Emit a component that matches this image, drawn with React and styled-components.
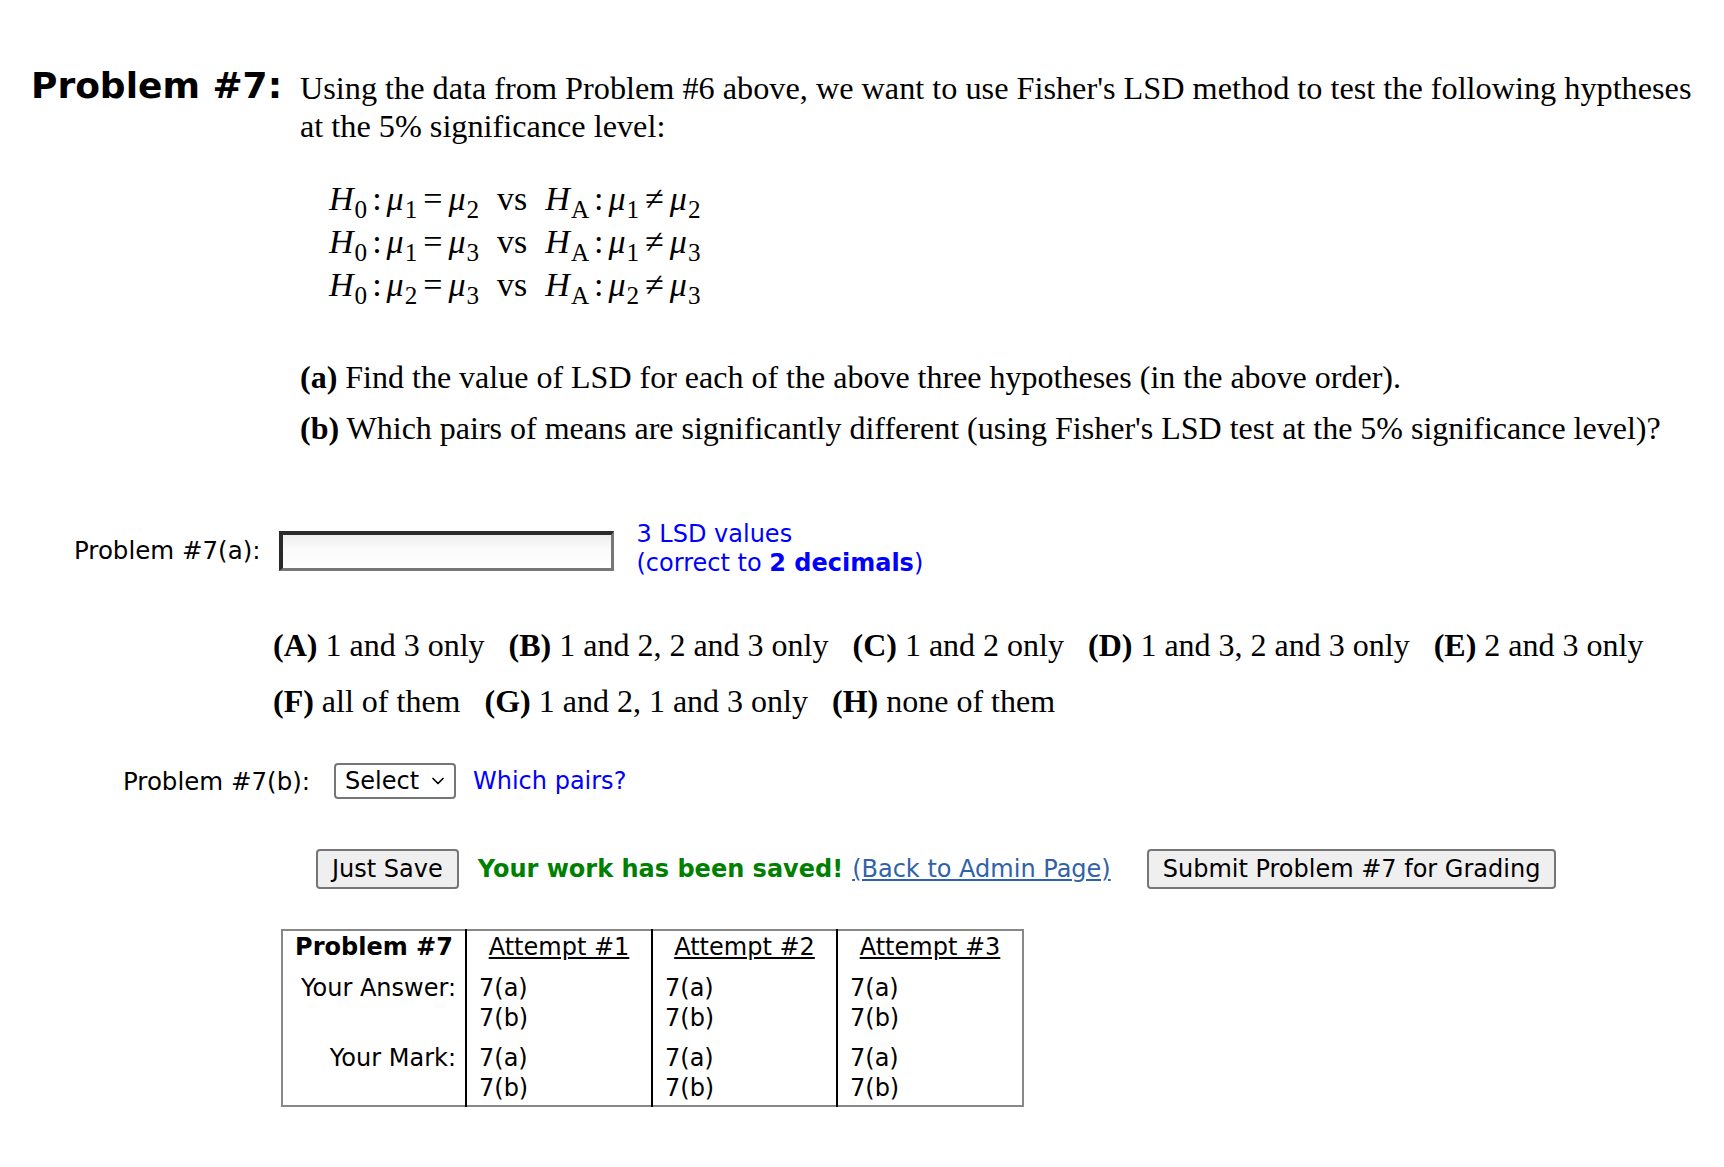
import React from 'react';
import styled, { createGlobalStyle } from 'styled-components';
import { ChevronDown } from 'lucide-react';

const GlobalStyle = createGlobalStyle`
    html, body {
        margin: 0;
        padding: 0;
        background: #ffffff;
        color: #000000;
    }
`;

const Page = styled.div`
    width: 1724px;
    min-height: 1167px;
    padding-top: 63px;
    box-sizing: border-box;
`;

const ProblemRow = styled.div`
    display: flex;
    align-items: flex-start;
    padding-left: 31px;
`;

const ProblemTitle = styled.div`
    width: 269px;
    flex-shrink: 0;
    font-family: "DejaVu Sans", Verdana, sans-serif;
    font-weight: bold;
    font-size: 36px;
    line-height: 46px;
`;

const SerifText = styled.div`
    font-family: "Liberation Serif", "Times New Roman", serif;
    font-size: 32px;
    line-height: 38px;
    white-space: nowrap;
`;

const Intro = styled(SerifText)`
    padding-top: 6px;
    font-size: 32.25px;
`;

const Equations = styled.div`
    margin: 32px 0 0 329px;
    font-family: "Liberation Serif", "Times New Roman", serif;
    font-size: 34px;
    line-height: 43px;
`;

const EqLine = styled.div`
    white-space: nowrap;
`;

const Var = styled.i`
    font-style: italic;
`;

const Sub = styled.sub`
    font-size: 0.74em;
    line-height: 0;
    vertical-align: -0.3em;
    margin-left: 1px;
`;

const Op = styled.span`
    margin: 0 ${(p) => p.$space || 6}px;
`;

const Vs = styled.span`
    margin: 0 18px;
`;

const Parts = styled.div`
    margin: 52px 0 0 300px;
    display: flex;
    flex-direction: column;
    gap: 13px;
`;

const SansLabel = styled.span`
    font-family: "DejaVu Sans", Verdana, sans-serif;
    font-size: 24.5px;
    white-space: nowrap;
`;

const AnswerRow = styled.div`
    display: flex;
    align-items: center;
    padding-left: ${(p) => p.$indent}px;
    margin-top: ${(p) => p.$top}px;
`;

const TextInput = styled.input`
    width: 335px;
    height: 40px;
    box-sizing: border-box;
    margin-left: 19px;
    border-style: solid;
    border-width: 4px 3px 3px 4px;
    border-color: #2a2a2a #777777 #777777 #2a2a2a;
    background: linear-gradient(#eeeeee, #fafafa 40%, #ffffff);
    font-size: 22px;
    outline: none;
`;

const Hint = styled.div`
    margin-left: 22px;
    font-family: "DejaVu Sans", Verdana, sans-serif;
    font-size: 24px;
    line-height: 29px;
    color: #0000ff;
    align-self: flex-start;
    margin-top: -3px;

    b {
        font-weight: bold;
    }
`;

const Choices = styled.div`
    margin: 39px 0 0 273px;
    font-family: "Liberation Serif", "Times New Roman", serif;
    font-size: 32px;
    line-height: 56px;
`;

const Choice = styled.span`
    white-space: nowrap;
    margin-right: 24px;

    b {
        font-weight: bold;
    }
`;

const SelectWrap = styled.span`
    position: relative;
    display: inline-flex;
    margin-left: 24px;
`;

const PairSelect = styled.select`
    appearance: none;
    width: 122px;
    height: 36px;
    font-family: "DejaVu Sans", Verdana, sans-serif;
    font-size: 24px;
    color: #000;
    background: #ffffff;
    border: 2px solid #767676;
    border-radius: 4px;
    padding: 0 30px 0 9px;
`;

const Caret = styled(ChevronDown)`
    position: absolute;
    right: 8px;
    top: 50%;
    transform: translateY(-50%);
    pointer-events: none;
`;

const BlueNote = styled.span`
    margin-left: 17px;
    font-family: "DejaVu Sans", Verdana, sans-serif;
    font-size: 24px;
    color: #0000ff;
`;

const Button = styled.button`
    height: 40px;
    padding: 0 ${(p) => p.$pad || 14}px;
    font-family: "DejaVu Sans", Verdana, sans-serif;
    font-size: 24px;
    color: #000;
    background: #efefef;
    border: 2px solid #767676;
    border-radius: 4px;
    margin-left: ${(p) => p.$left || 0}px;
`;

const Saved = styled.span`
    margin-left: 19px;
    font-family: "DejaVu Sans", Verdana, sans-serif;
    font-size: 24px;
    font-weight: bold;
    color: #008000;
    white-space: nowrap;
`;

const AdminLink = styled.a`
    margin-left: 9px;
    font-family: "DejaVu Sans", Verdana, sans-serif;
    font-size: 24px;
    color: #2f62a8;
    text-decoration: underline;
    white-space: nowrap;
`;

const Attempts = styled.table`
    margin: 40px 0 0 281px;
    border-collapse: collapse;
    border: 2px solid #888888;
    font-family: "DejaVu Sans", Verdana, sans-serif;
    font-size: 24px;
    line-height: 30px;
`;

const HeadCell = styled.th`
    width: ${(p) => p.$w}px;
    padding: 1px 6px 6px;
    text-align: center;
    font-weight: ${(p) => (p.$bold ? 'bold' : 'normal')};
    text-decoration: ${(p) => (p.$bold ? 'none' : 'underline')};
    border-left: ${(p) => (p.$first ? 'none' : '2px solid #000')};
`;

const LabelCell = styled.td`
    text-align: right;
    vertical-align: top;
    white-space: nowrap;
    padding: ${(p) => (p.$last ? '5px 9px 2px 6px' : '5px 9px 5px 6px')};
`;

const ValueCell = styled.td`
    vertical-align: top;
    padding: ${(p) => (p.$last ? '5px 8px 2px 12px' : '5px 8px 5px 12px')};
    border-left: 2px solid #000;
`;

const Hypothesis = ({ a, b }) => (
    <EqLine>
        <Var>H</Var><Sub>0</Sub><Op $space={5}>:</Op><Var>μ</Var><Sub>{a}</Sub><Op>=</Op><Var>μ</Var><Sub>{b}</Sub>
        <Vs>vs</Vs>
        <Var>H</Var><Sub>A</Sub><Op $space={5}>:</Op><Var>μ</Var><Sub>{a}</Sub><Op>≠</Op><Var>μ</Var><Sub>{b}</Sub>
    </EqLine>
);

const choices = [
    ['(A)', '1 and 3 only'],
    ['(B)', '1 and 2, 2 and 3 only'],
    ['(C)', '1 and 2 only'],
    ['(D)', '1 and 3, 2 and 3 only'],
    ['(E)', '2 and 3 only'],
    ['(F)', 'all of them'],
    ['(G)', '1 and 2, 1 and 3 only'],
    ['(H)', 'none of them'],
];

const App = () => {
    return (
        <Page>
            <GlobalStyle />
            <ProblemRow>
                <ProblemTitle>Problem #7:</ProblemTitle>
                <Intro>
                    Using the data from Problem #6 above, we want to use Fisher's LSD method to test the following hyptheses
                    <br />
                    at the 5% significance level:
                </Intro>
            </ProblemRow>

            <Equations>
                <Hypothesis a="1" b="2" />
                <Hypothesis a="1" b="3" />
                <Hypothesis a="2" b="3" />
            </Equations>

            <Parts>
                <SerifText><b>(a)</b> Find the value of LSD for each of the above three hypotheses (in the above order).</SerifText>
                <SerifText><b>(b)</b> Which pairs of means are significantly different (using Fisher's LSD test at the 5% significance level)?</SerifText>
            </Parts>

            <AnswerRow $indent={74} $top={76}>
                <SansLabel>Problem #7(a):</SansLabel>
                <TextInput type="text" />
                <Hint>
                    3 LSD values<br />
                    (correct to <b>2 decimals</b>)
                </Hint>
            </AnswerRow>

            <Choices>
                {choices.slice(0, 5).map(([k, v]) => (
                    <Choice key={k}><b>{k}</b> {v}</Choice>
                ))}
                <br />
                {choices.slice(5).map(([k, v]) => (
                    <Choice key={k}><b>{k}</b> {v}</Choice>
                ))}
            </Choices>

            <AnswerRow $indent={123} $top={34}>
                <SansLabel>Problem #7(b):</SansLabel>
                <SelectWrap>
                    <PairSelect defaultValue="">
                        <option value="">Select</option>
                        {choices.map(([k]) => (
                            <option key={k} value={k}>{k.replace(/[()]/g, '')}</option>
                        ))}
                    </PairSelect>
                    <Caret size={20} strokeWidth={2} color="#000" />
                </SelectWrap>
                <BlueNote>Which pairs?</BlueNote>
            </AnswerRow>

            <AnswerRow $indent={316} $top={50}>
                <Button>Just Save</Button>
                <Saved>Your work has been saved!</Saved>
                <AdminLink href="#">(Back to Admin Page)</AdminLink>
                <Button $left={36}>Submit Problem #7 for Grading</Button>
            </AnswerRow>

            <Attempts>
                <thead>
                    <tr>
                        <HeadCell $bold $first $w={170}>Problem #7</HeadCell>
                        <HeadCell $w={172}>Attempt #1</HeadCell>
                        <HeadCell $w={171}>Attempt #2</HeadCell>
                        <HeadCell $w={172}>Attempt #3</HeadCell>
                    </tr>
                </thead>
                <tbody>
                    <tr>
                        <LabelCell>Your Answer:</LabelCell>
                        {[1, 2, 3].map((n) => (
                            <ValueCell key={n}>7(a)<br />7(b)</ValueCell>
                        ))}
                    </tr>
                    <tr>
                        <LabelCell $last>Your Mark:</LabelCell>
                        {[1, 2, 3].map((n) => (
                            <ValueCell key={n} $last>7(a)<br />7(b)</ValueCell>
                        ))}
                    </tr>
                </tbody>
            </Attempts>
        </Page>
    );
};

export default App;
